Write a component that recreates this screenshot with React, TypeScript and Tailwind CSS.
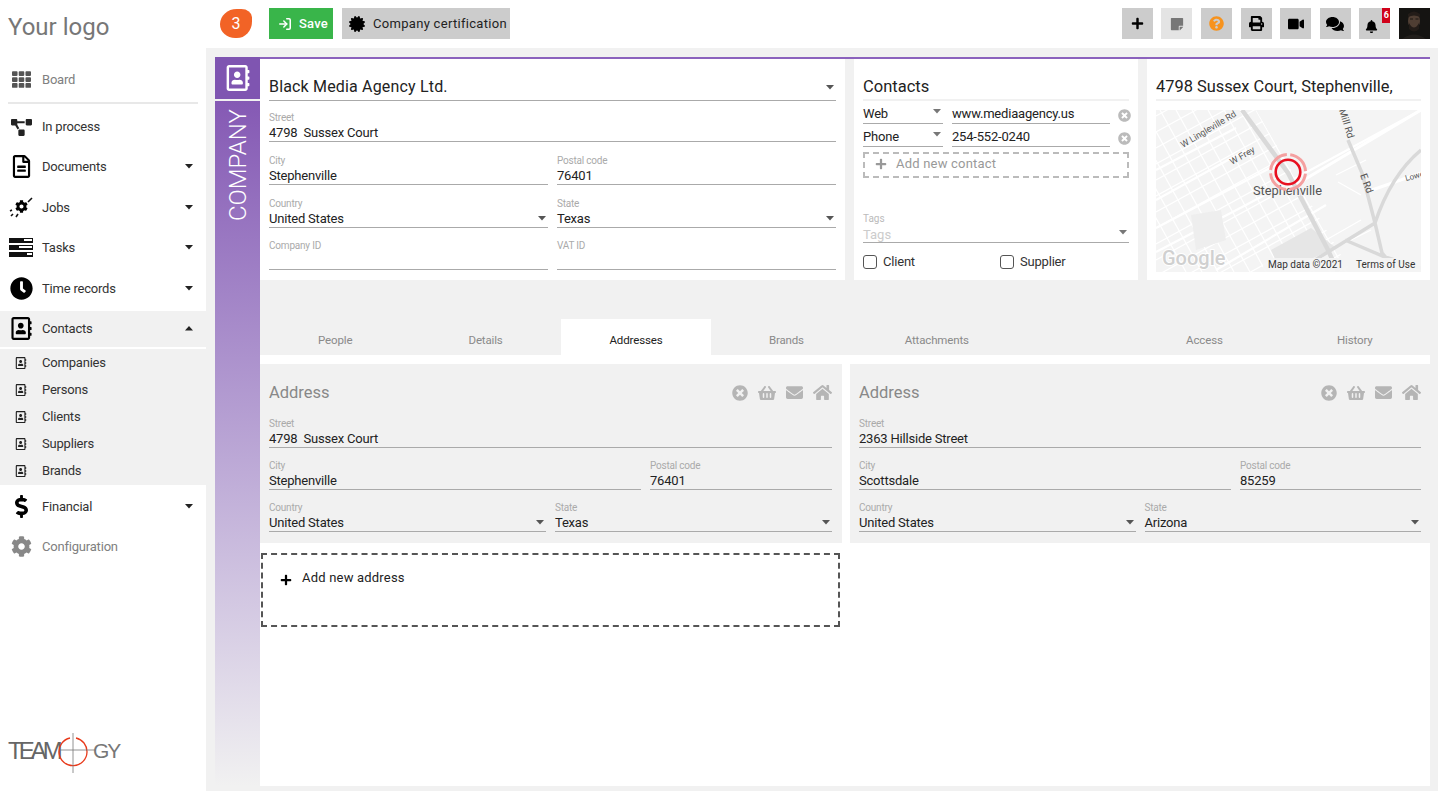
import { LogIn } from "lucide-react";
import {
  FaBell,
  FaCertificate,
  FaClock,
  FaCog,
  FaComments,
  FaDollarSign,
  FaEnvelope,
  FaHome,
  FaPlus,
  FaPrint,
  FaProjectDiagram,
  FaQuestionCircle,
  FaRegAddressBook,
  FaRegFileAlt,
  FaShoppingBasket,
  FaStickyNote,
  FaTh,
  FaTimesCircle,
  FaVideo,
} from "react-icons/fa";

function Caret({ up = false, color = "#222" }: { up?: boolean; color?: string }) {
  return (
    <svg width="8" height="5" viewBox="0 0 8 5" className="shrink-0">
      <path d={up ? "M0 4.5 L4 0 L8 4.5 Z" : "M0 0 L8 0 L4 4.5 Z"} fill={color} />
    </svg>
  );
}

function JobsIcon() {
  return (
    <div className="relative w-[24px] h-[24px]">
      <FaCog className="absolute left-[6px] top-[5px] text-[13px] text-black" />
      <svg width="24" height="24" viewBox="0 0 24 24" className="absolute left-0 top-0">
        <path d="M19 7 L23 3 M4 19 L2 21 M9 19 L7 22 M3 15 L1 16" stroke="#111" strokeWidth="1.6" />
      </svg>
    </div>
  );
}

function TasksIcon() {
  return (
    <svg width="24" height="20" viewBox="0 0 24 20">
      <rect x="0" y="1" width="24" height="5" fill="#111" />
      <rect x="15" y="2" width="8" height="2" fill="#fff" />
      <rect x="0" y="8" width="24" height="5" fill="#111" />
      <rect x="10" y="9" width="13" height="2" fill="#fff" />
      <rect x="0" y="15" width="24" height="5" fill="#111" />
      <rect x="18" y="16" width="5" height="2" fill="#fff" />
    </svg>
  );
}

const subItems = ["Companies", "Persons", "Clients", "Suppliers", "Brands"];

function NavItem({
  icon,
  label,
  caret,
  caretUp,
  muted,
  className = "h-[40.5px]",
}: {
  icon: React.ReactNode;
  label: string;
  caret?: boolean;
  caretUp?: boolean;
  muted?: boolean;
  className?: string;
}) {
  return (
    <div className={`flex items-center pl-[8px] pr-[13px] ${className}`}>
      <div className="w-[26px] flex justify-center items-center">{icon}</div>
      <span className={`ml-[8px] flex-1 text-[13px] tracking-[-0.2px] ${muted ? "text-[#808080]" : "text-[#333]"}`}>
        {label}
      </span>
      {caret && <Caret />}
      {caretUp && <Caret up />}
    </div>
  );
}

function Sidebar() {
  return (
    <aside className="w-[206px] shrink-0 bg-white flex flex-col">
      <div className="h-[53px] pl-[8px] flex items-center text-[24px] text-[#777] leading-none">Your logo</div>
      <NavItem
        icon={<FaTh className="text-[19px] text-[#555]" />}
        label="Board"
        muted
        className="h-[53px]"
      />
      <div className="h-[2px] mx-[8px] bg-[#e8e8e8] -mt-[4px]" />
      <div className="h-[4px]" />
      <NavItem icon={<FaProjectDiagram className="text-[21px] text-[#222]" />} label="In process" className="h-[38px]" />
      <NavItem icon={<FaRegFileAlt className="text-[23px] text-black" />} label="Documents" caret />
      <NavItem icon={<JobsIcon />} label="Jobs" caret className="h-[40.5px] pt-[1px]" />
      <NavItem icon={<TasksIcon />} label="Tasks" caret />
      <NavItem icon={<FaClock className="text-[23px] text-black" />} label="Time records" caret className="h-[41px] pt-[1px]" />
      <div className="h-[2px]" />
      <NavItem
        icon={<FaRegAddressBook className="text-[23px] text-black" />}
        label="Contacts"
        caretUp
        className="h-[36px] bg-[#f1f1f1]"
      />
      <div className="h-[2px]" />
      <div className="bg-[#f1f1f1] h-[136px] pt-[1px] flex flex-col">
        {subItems.map((item) => (
          <div key={item} className="h-[27px] shrink-0 flex items-center pl-[15px] text-[13px] tracking-[-0.2px] text-[#333]">
            <FaRegAddressBook className="text-[12px] text-[#222]" />
            <span className="ml-[15px]">{item}</span>
          </div>
        ))}
      </div>
      <NavItem
        icon={<FaDollarSign className="text-[23px] text-black" />}
        label="Financial"
        caret
        className="h-[44px]"
      />
      <NavItem icon={<FaCog className="text-[21px] text-[#888]" />} label="Configuration" muted className="h-[36px]" />
      <div className="mt-auto mb-[18px] ml-[8px]">
        <TeamogyLogo />
      </div>
    </aside>
  );
}

function TeamogyLogo() {
  return (
    <div className="relative w-[114px] h-[40px]">
      <span className="absolute left-0 top-[6px] font-['Liberation_Sans',sans-serif] text-[24px] font-light text-[#666] tracking-[-4px] leading-none">
        TEAM
      </span>
      <span className="absolute left-[85px] top-[7px] font-['Liberation_Sans',sans-serif] text-[21px] text-[#777] tracking-[-2px] leading-none">
        GY
      </span>
      <svg width="44" height="40" viewBox="0 0 44 40" className="absolute left-[46px] top-0">
        <path d="M16 5 A14 14 0 1 0 33 19 A14 14 0 0 0 22 5" fill="none" stroke="#e8391a" strokeWidth="1.3" />
        <path d="M19 0 V40 M6 17 H42" stroke="#777" strokeWidth="0.8" />
      </svg>
    </div>
  );
}

function TopButton({ children, light }: { children: React.ReactNode; light?: boolean }) {
  return (
    <div className={`relative w-[31px] h-[31px] flex items-center justify-center ${light ? "bg-[#e4e4e4]" : "bg-[#cccccc]"}`}>
      {children}
    </div>
  );
}

function TopBar() {
  return (
    <div className="h-[48px] shrink-0 bg-white flex items-center pl-[14px] pr-[8px] pb-[1px]">
      <div className="w-[32px] h-[29px] bg-[#f26326] text-white text-[16px] flex items-center justify-center rounded-[55%_35%_50%_50%/55%_30%_60%_50%]">
        3
      </div>
      <button className="ml-[17px] w-[64px] h-[31px] bg-[#39b54a] text-white text-[13px] font-medium tracking-[0.2px] flex items-center pl-[9px]">
        <LogIn size={14} strokeWidth={2.6} />
        <span className="ml-[7px]">Save</span>
      </button>
      <button className="ml-[9px] w-[168px] h-[31px] bg-[#cccccc] text-[#222] text-[13px] tracking-[0.3px] flex items-center pl-[7px]">
        <FaCertificate className="text-[16px] text-black" />
        <span className="ml-[8px] whitespace-nowrap">Company certification</span>
      </button>
      <div className="ml-auto flex items-center gap-[8.6px]">
        <TopButton>
          <FaPlus className="text-[13px] text-black" />
        </TopButton>
        <TopButton light>
          <FaStickyNote className="text-[14px] text-[#777]" />
        </TopButton>
        <TopButton>
          <FaQuestionCircle className="text-[15px] text-[#f7931e]" />
        </TopButton>
        <TopButton>
          <FaPrint className="text-[15px] text-black" />
        </TopButton>
        <TopButton>
          <FaVideo className="text-[16px] text-black" />
        </TopButton>
        <TopButton>
          <FaComments className="text-[18px] text-black" />
        </TopButton>
        <TopButton>
          <FaBell className="text-[13px] text-black mt-[5px] -ml-[6px]" />
          <span className="absolute right-0 top-0 w-[8px] h-[15px] bg-[#d0021b] text-white text-[9px] font-bold flex items-center justify-center leading-none">
            6
          </span>
        </TopButton>
        <div className="w-[31px] h-[31px] bg-[#151412] flex items-center justify-center overflow-hidden">
          <svg width="31" height="31" viewBox="0 0 31 31">
            <ellipse cx="15" cy="13" rx="6" ry="8" fill="#4f3e33" />
            <path d="M9 6 Q15 1 21 6 L21 9 Q15 6 9 9 Z" fill="#231c18" />
            <path d="M11 11 H14 M16.5 11 H19.5" stroke="#1c1613" strokeWidth="1.2" />
            <path d="M10 15 Q15 24 20 15 L20 21 Q15 26 10 21 Z" fill="#231c18" />
            <path d="M3 31 Q15 22 27 31 Z" fill="#211e1b" />
          </svg>
        </div>
      </div>
    </div>
  );
}

function Field({
  label,
  value,
  select,
  className = "",
}: {
  label: string;
  value?: string;
  select?: boolean;
  className?: string;
}) {
  return (
    <div className={`h-[30px] border-b border-[#aaa] flex flex-col ${className}`}>
      <div className="h-[12px] text-[10px] leading-[12px] tracking-[-0.2px] text-[#aaa]">{label}</div>
      <div className="flex-1 flex items-center justify-between">
        <span className="text-[13px] leading-[17px] tracking-[-0.2px] text-[#222] whitespace-pre">{value}</span>
        {select && (
          <span className="pr-[2px]">
            <Caret color="#555" />
          </span>
        )}
      </div>
    </div>
  );
}

function CompanyPanel() {
  return (
    <div className="flex-1 bg-white px-[9px] h-[221px]">
      <div className="h-[42px] border-b border-[#aaa] flex items-center justify-between pt-[15px]">
        <span className="text-[16px] tracking-[0.17px] text-[#222]">Black Media Agency Ltd.</span>
        <span className="pr-[2px]">
          <Caret color="#555" />
        </span>
      </div>
      <Field label="Street" value="4798  Sussex Court" className="mt-[11px]" />
      <div className="grid grid-cols-2 gap-x-[9px] gap-y-[12.5px] mt-[13px]">
        <Field label="City" value="Stephenville" />
        <Field label="Postal code" value="76401" />
        <Field label="Country" value="United States" select />
        <Field label="State" value="Texas" select />
        <Field label="Company ID" />
        <Field label="VAT ID" />
      </div>
    </div>
  );
}

function ContactRow({ type, value }: { type: string; value: string }) {
  return (
    <div className="flex items-end h-[23px]">
      <div className="w-[80px] shrink-0 h-[23px] border-b border-[#aaa] flex items-center justify-between pr-[2px] pt-[3px]">
        <span className="text-[13px] tracking-[-0.2px] text-[#222]">{type}</span>
        <span className="-mt-[4px]">
          <Caret color="#777" />
        </span>
      </div>
      <div className="ml-[9px] w-[158px] shrink-0 h-[23px] border-b border-[#aaa] flex items-center pt-[3px] text-[13px] tracking-[-0.2px] text-[#222]">
        {value}
      </div>
      <FaTimesCircle className="ml-[8px] mb-[2px] text-[13px] text-[#bbb] shrink-0" />
    </div>
  );
}

function ContactsPanel() {
  return (
    <div className="w-[284px] shrink-0 bg-white px-[9px] h-[221px] flex flex-col">
      <div className="h-[42px] border-b-2 border-[#f1f1f1] flex items-end pb-[1px]">
        <span className="text-[16.5px] leading-[22px] text-[#222]">Contacts</span>
      </div>
      <ContactRow type="Web" value="www.mediaagency.us" />
      <ContactRow type="Phone" value="254-552-0240" />
      <div className="mt-[5px] h-[26px] border-2 border-dashed border-[#bbb] flex items-center pb-[2px] pl-[10px] text-[#999] text-[13px] tracking-[0.2px]">
        <FaPlus className="text-[12px] text-[#999]" />
        <span className="ml-[9px]">Add new contact</span>
      </div>
      <div className="mt-[35px] h-[30px] border-b border-[#aaa] flex flex-col">
        <div className="h-[12px] text-[10px] leading-[12px] text-[#bbb]">Tags</div>
        <div className="flex-1 flex items-center justify-between pr-[2px]">
          <span className="text-[13px] text-[#ccc]">Tags</span>
          <span className="-mt-[4px]">
            <Caret color="#777" />
          </span>
        </div>
      </div>
      <div className="flex items-center mt-[9px] text-[13px] tracking-[-0.2px] text-[#333]">
        <div className="w-[137px] flex items-center">
          <span className="w-[14px] h-[14px] border border-[#555] rounded-[3px]" />
          <span className="ml-[6px]">Client</span>
        </div>
        <span className="w-[14px] h-[14px] border border-[#555] rounded-[3px]" />
        <span className="ml-[6px]">Supplier</span>
      </div>
    </div>
  );
}

function MapPicture() {
  const blocks = Array.from({ length: 20 }, (_, i) => i);
  return (
    <svg width="265" height="162" viewBox="0 0 265 162" className="block">
      <defs>
        <clipPath id="town">
          <path d="M0 0 H100 L195 162 H0 Z" />
        </clipPath>
      </defs>
      <rect width="265" height="162" fill="#f4f4f4" />
      <g clipPath="url(#town)" stroke="#fff" strokeWidth="1.2" fill="none">
        {blocks.map((i) => (
          <path key={`a${i}`} d={`M0 ${i * 16 - 10} L200 ${i * 16 - 120}`} />
        ))}
        {blocks.map((i) => (
          <path key={`b${i}`} d={`M${i * 16 - 60} 0 L${i * 16 + 30} 162`} />
        ))}
      </g>
      <path d="M0 142 L90 95 L265 0 M0 118 L120 55 M0 90 L90 40 M0 60 L80 18 M60 160 L170 95" stroke="#fff" strokeWidth="2.2" fill="none" />
      <path d="M136 77 L265 0 M216 80 L265 63" stroke="#fff" strokeWidth="3" fill="none" />
      <path d="M180 65 L210 50 M182 72 L205 85 M170 130 L205 110 M175 140 L215 120" stroke="#fff" strokeWidth="1.3" fill="none" />
      <path d="M115 140 L155 118 L180 138 L125 162 Z" fill="#e6e6e6" />
      <path d="M35 105 L65 100 L70 130 L40 140 Z" fill="#eeeeee" />
      <path d="M86 0 L132 63 L172 140 L182 162" stroke="#d9d9d9" strokeWidth="4.5" fill="none" />
      <path d="M192 30 L206 63 L219 113 L226 143 L232 150 M219 113 Q235 65 265 40 M159 150 L219 113 M189 130 L229 147 L265 158" stroke="#d9d9d9" strokeWidth="3.5" fill="none" />
      <text transform="translate(27 38) rotate(-31)" fontSize="9" fill="#555" fontFamily="Roboto">W Lingleville Rd</text>
      <text transform="translate(76 55) rotate(-30)" fontSize="9" fill="#555" fontFamily="Roboto">W Frey</text>
      <text transform="translate(183 0) rotate(73)" fontSize="10" fill="#555" fontFamily="Roboto">Mill Rd</text>
      <text transform="translate(204 65) rotate(70)" fontSize="10" fill="#555" fontFamily="Roboto">E Rd</text>
      <text transform="translate(250 71) rotate(-15)" fontSize="8" fill="#555" fontFamily="Roboto">Lowe</text>
      <text x="97" y="85" fontSize="12.8" fill="#555" fontFamily="Roboto" stroke="#f4f4f4" strokeWidth="2" paintOrder="stroke">Stephenville</text>
      <circle cx="132" cy="62" r="12.3" fill="none" stroke="#e81020" strokeWidth="2.6" />
      <circle cx="132" cy="62" r="17.5" fill="none" stroke="#f4a0a0" strokeWidth="3" strokeDasharray="24 3.5" strokeDashoffset="-1.75" />
      <text x="6" y="155" fontSize="20" fontWeight="500" fill="#d0d0d0" stroke="#fff" strokeWidth="2" paintOrder="stroke" fontFamily="Roboto">Google</text>
      <rect x="107" y="148" width="158" height="14" fill="#f4f4f4" fillOpacity="0.9" />
      <text x="112" y="158" fontSize="10" fill="#333" fontFamily="Roboto">Map data ©2021</text>
      <text x="200" y="158" fontSize="10" fill="#333" fontFamily="Roboto">Terms of Use</text>
    </svg>
  );
}

function MapPanel() {
  return (
    <div className="w-[283px] shrink-0 bg-white px-[9px] h-[221px]">
      <div className="h-[42px] border-b-2 border-[#f1f1f1] flex items-end pb-[1px]">
        <span className="text-[16.4px] leading-[22px] text-[#222] whitespace-nowrap">4798 Sussex Court, Stephenville,</span>
      </div>
      <div className="mt-[9px]">
        <MapPicture />
      </div>
    </div>
  );
}

function Tabs() {
  const left = ["People", "Details", "Addresses", "Brands", "Attachments"];
  const right = ["Access", "History"];
  const tab = (name: string) => (
    <div
      key={name}
      className={`w-[150.4px] flex items-center justify-center pt-[7px] text-[11.5px] tracking-[-0.15px] ${
        name === "Addresses" ? "bg-white text-[#222]" : "text-[#8a8a8a]"
      }`}
    >
      {name}
    </div>
  );
  return (
    <div className="h-[36px] flex justify-between">
      <div className="flex">{left.map(tab)}</div>
      <div className="flex">{right.map(tab)}</div>
    </div>
  );
}

function AddressCard({
  street,
  city,
  postal,
  state,
  className,
  postalWidth,
}: {
  street: string;
  city: string;
  postal: string;
  state: string;
  className: string;
  postalWidth: string;
}) {
  return (
    <div className={`bg-[#f1f1f1] h-[179px] pl-[9px] ${className}`}>
      <div className="h-[43px] flex items-end justify-between pb-[2px]">
        <span className="text-[16.5px] leading-[24px] text-[#888]">Address</span>
        <div className="flex items-center gap-[10px] text-[#b5b5b5] pb-[3px]">
          <FaTimesCircle className="text-[16px]" />
          <FaShoppingBasket className="text-[18px]" />
          <FaEnvelope className="text-[17px]" />
          <FaHome className="text-[19px]" />
        </div>
      </div>
      <Field label="Street" value={street} className="mt-[11px]" />
      <div className="flex gap-[9px] mt-[12px]">
        <Field label="City" value={city} className="flex-1" />
        <Field label="Postal code" value={postal} className={postalWidth} />
      </div>
      <div className="grid grid-cols-2 gap-[9px] mt-[12px]">
        <Field label="Country" value="United States" select />
        <Field label="State" value={state} select />
      </div>
    </div>
  );
}

function Content() {
  return (
    <div className="flex-1 flex flex-col border-t-2 border-[#8b62bd] min-w-0">
      <div className="flex gap-[9px]">
        <CompanyPanel />
        <ContactsPanel />
        <MapPanel />
      </div>
      <div className="h-[39px]" />
      <Tabs />
      <div className="flex-1 bg-white pt-[9px]">
        <div className="flex gap-[8px]">
          <AddressCard
            street="4798  Sussex Court"
            city="Stephenville"
            postal="76401"
            state="Texas"
            className="w-[582px] pr-[10px]"
            postalWidth="w-[182px]"
          />
          <AddressCard
            street="2363 Hillside Street"
            city="Scottsdale"
            postal="85259"
            state="Arizona"
            className="flex-1 pr-[9px]"
            postalWidth="w-[181px]"
          />
        </div>
        <div className="mt-[10px] ml-[1px] w-[579px] h-[74px] border-2 border-dashed border-[#555] flex items-start pt-[13px] pl-[17px] text-[13px] tracking-[0.2px] text-[#222]">
          <FaPlus className="text-[12px] text-black mt-[6px]" />
          <span className="ml-[10px]">Add new address</span>
        </div>
      </div>
    </div>
  );
}

export default function App() {
  return (
    <div className="flex h-screen w-full overflow-hidden bg-white font-['Roboto',sans-serif]">
      <Sidebar />
      <div className="flex-1 flex flex-col min-w-0">
        <TopBar />
        <main className="flex-1 flex bg-[#f1f1f1] pt-[9px] pl-[9px] pr-[8px] pb-[5px] min-h-0">
          <div className="w-[45px] shrink-0 flex flex-col">
            <div className="h-[42px] bg-[#7f55b1] flex items-center justify-center">
              <FaRegAddressBook className="text-[26px] text-white" />
            </div>
            <div className="h-[2px]" />
            <div className="flex-1 bg-gradient-to-b from-[#8559b4] to-[#f1f1f1] flex justify-center pt-[4px]">
              <span className="[writing-mode:vertical-rl] rotate-180 text-[24px] font-light text-white leading-none h-[116px]">
                COMPANY
              </span>
            </div>
          </div>
          <Content />
        </main>
      </div>
    </div>
  );
}
